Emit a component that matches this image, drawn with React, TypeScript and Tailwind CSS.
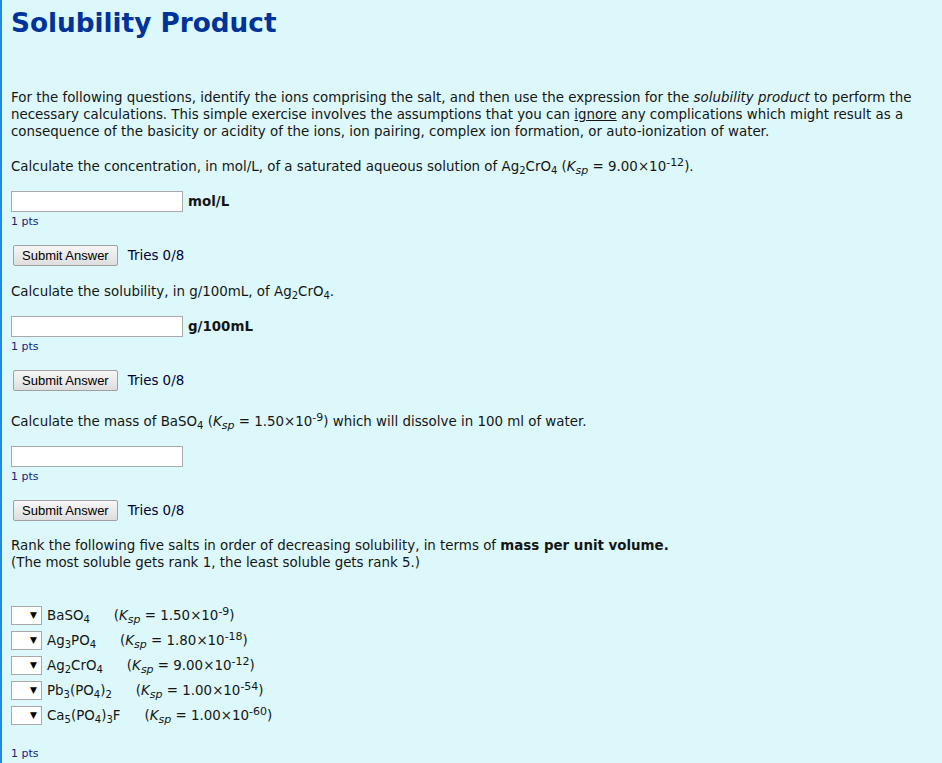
import React from "react"

const body = "font-['Verdana','DejaVu_Sans',sans-serif]"

function Ksp({ value, exp }: { value: string; exp: string }) {
  return (
    <>
      (<i>K</i>
      <sub className="text-[11px] italic">sp</sub> = {value}×10
      <sup className="text-[11px]">{exp}</sup>)
    </>
  )
}

function AnswerInput({ unit }: { unit?: string }) {
  return (
    <div className="flex items-center">
      <div className="w-[172px] h-[21px] bg-white border border-[#a9a9a9]" />
      {unit && <span className="ml-[5px] font-bold">{unit}</span>}
    </div>
  )
}

function Pts() {
  return <div className="text-[11px] text-[#1a237e] mt-[3px] leading-[14px]">1 pts</div>
}

function SubmitRow() {
  return (
    <div className="flex items-center mt-[16px]">
      <button className="ml-[2px] h-[21px] px-[8px] border border-[#a0a0a0] rounded-[2px] bg-gradient-to-b from-[#f6f6f6] to-[#dedede] text-[13px] text-black font-['Liberation_Sans',Arial,sans-serif] leading-none">
        Submit Answer
      </button>
      <span className="ml-[10px] text-[#000033]">Tries 0/8</span>
    </div>
  )
}

function Select() {
  return (
    <div className="w-[31px] h-[19px] bg-white border border-[#a9a9a9] flex items-center justify-end pr-[4px] text-[9px] text-black leading-none">
      ▼
    </div>
  )
}

const salts: { name: React.ReactNode; value: string; exp: string }[] = [
  { name: <>BaSO<sub>4</sub></>, value: "1.50", exp: "-9" },
  { name: <>Ag<sub>3</sub>PO<sub>4</sub></>, value: "1.80", exp: "-18" },
  { name: <>Ag<sub>2</sub>CrO<sub>4</sub></>, value: "9.00", exp: "-12" },
  { name: <>Pb<sub>3</sub>(PO<sub>4</sub>)<sub>2</sub></>, value: "1.00", exp: "-54" },
  { name: <>Ca<sub>5</sub>(PO<sub>4</sub>)<sub>3</sub>F</>, value: "1.00", exp: "-60" },
]

export default function App() {
  return (
    <div className={`w-[942px] h-[763px] overflow-hidden bg-[#dcf8fa] border-l-2 border-[#1e88e5] text-[#151515] ${body}`}>
      <div className="pl-[9px] pr-2 text-[13.4px] leading-[17px]">
        <h1 className="text-[26.3px] font-bold text-[#003399] leading-[30px] pt-[8px]">Solubility Product</h1>

        <p className="mt-[51px]">
          For the following questions, identify the ions comprising the salt, and then use the expression for the{" "}
          <i>solubility product</i> to perform the necessary calculations. This simple exercise involves the
          assumptions that you can <u>ignore</u> any complications which might result as a consequence of the basicity
          or acidity of the ions, ion pairing, complex ion formation, or auto-ionization of water.
        </p>

        <p className="mt-[18px]">
          Calculate the concentration, in mol/L, of a saturated aqueous solution of Ag<sub>2</sub>CrO<sub>4</sub>{" "}
          <Ksp value="9.00" exp="-12" />.
        </p>
        <div className="mt-[16px]">
          <AnswerInput unit="mol/L" />
          <Pts />
          <SubmitRow />
        </div>

        <p className="mt-[17px]">
          Calculate the solubility, in g/100mL, of Ag<sub>2</sub>CrO<sub>4</sub>.
        </p>
        <div className="mt-[16px]">
          <AnswerInput unit="g/100mL" />
          <Pts />
          <SubmitRow />
        </div>

        <p className="mt-[22px]">
          Calculate the mass of BaSO<sub>4</sub> <Ksp value="1.50" exp="-9" /> which will dissolve in 100 ml of water.
        </p>
        <div className="mt-[16px]">
          <AnswerInput />
          <Pts />
          <SubmitRow />
        </div>

        <p className="mt-[16px]">
          Rank the following five salts in order of decreasing solubility, in terms of <b>mass per unit volume.</b>
          <br />
          (The most soluble gets rank 1, the least soluble gets rank 5.)
        </p>

        <div className="mt-[35px] flex flex-col gap-[6px]">
          {salts.map((s, i) => (
            <div key={i} className="flex items-center h-[19px]">
              <Select />
              <span className="ml-[5px]">{s.name}</span>
              <span className="ml-[24px]">
                <Ksp value={s.value} exp={s.exp} />
              </span>
            </div>
          ))}
        </div>

        <div className="mt-[22px]">
          <Pts />
        </div>
      </div>
    </div>
  )
}
